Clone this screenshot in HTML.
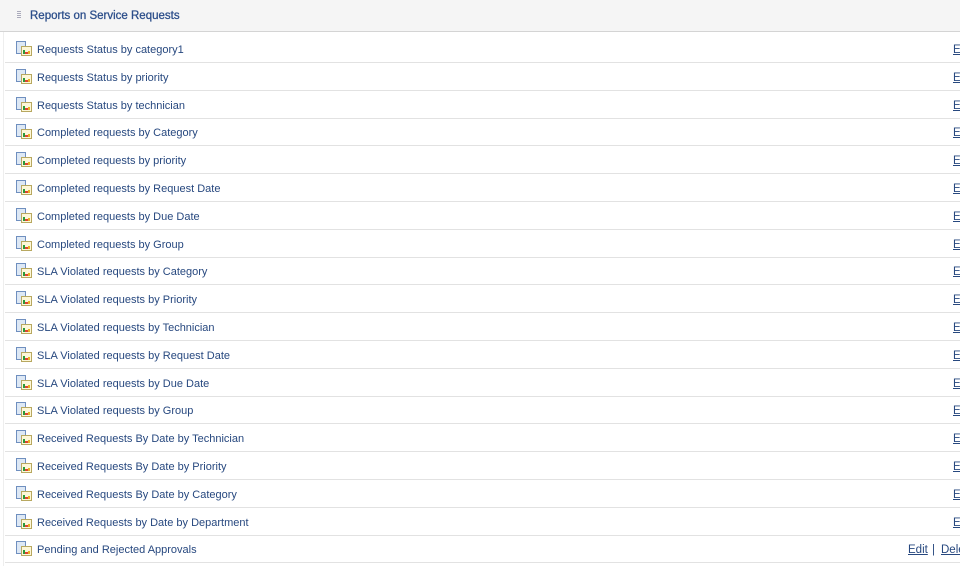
<!DOCTYPE html>
<html><head><style>
body{margin:0;width:960px;height:566px;overflow:hidden;background:#fff;font-family:"Liberation Sans",sans-serif;position:relative}
.hdr{position:absolute;left:0;top:0;width:960px;height:31px;background:#f5f5f5;border-bottom:1px solid #d4d4d4}
.hdr span{position:absolute;left:30px;top:10px;font-size:11.5px;color:#2d4f8b;-webkit-text-stroke:0.3px #2d4f8b}
.grip{position:absolute;left:17px;top:11px;width:4px;height:8px;background:repeating-linear-gradient(#aab 0 1px,transparent 1px 2px)}
.vl{position:absolute;left:3px;top:32px;width:1px;height:534px;background:#eee}
.row{position:absolute;left:5px;width:955px;height:27px;border-bottom:1px solid #e2e2e2}
.t{position:absolute;left:32px;top:9px;font-size:11px;color:#27487f;white-space:nowrap}
.e{position:absolute;left:948px;top:9px;font-size:11.5px;color:#27487f;text-decoration:underline}
.ic{position:absolute;left:11px;top:6px;width:16px;height:16px}
</style></head><body>
<div class="hdr"><div class="grip"></div><span>Reports on Service Requests</span></div>
<div class="vl"></div>
<svg width="0" height="0" style="position:absolute"><defs><g id="i"><rect x="0.5" y="0.5" width="9" height="12" fill="#dde8f5" stroke="#6f8fbf"/><rect x="5.5" y="5.5" width="10" height="9" fill="#fdf7d8" stroke="#b8a860"/><rect x="7" y="9" width="2" height="4" fill="#2a9a3a"/><rect x="9" y="11" width="3" height="2" fill="#d43"/><rect x="12" y="10" width="2" height="3" fill="#e8b020"/></g></defs></svg>
<div class="row" style="top:35px"><svg class="ic" viewBox="0 0 16 16"><use href="#i"/></svg><span class="t">Requests Status by category1</span><span class="e">Edit</span></div>
<div class="row" style="top:63px"><svg class="ic" viewBox="0 0 16 16"><use href="#i"/></svg><span class="t">Requests Status by priority</span><span class="e">Edit</span></div>
<div class="row" style="top:91px"><svg class="ic" viewBox="0 0 16 16"><use href="#i"/></svg><span class="t">Requests Status by technician</span><span class="e">Edit</span></div>
<div class="row" style="top:118px"><svg class="ic" viewBox="0 0 16 16"><use href="#i"/></svg><span class="t">Completed requests by Category</span><span class="e">Edit</span></div>
<div class="row" style="top:146px"><svg class="ic" viewBox="0 0 16 16"><use href="#i"/></svg><span class="t">Completed requests by priority</span><span class="e">Edit</span></div>
<div class="row" style="top:174px"><svg class="ic" viewBox="0 0 16 16"><use href="#i"/></svg><span class="t">Completed requests by Request Date</span><span class="e">Edit</span></div>
<div class="row" style="top:202px"><svg class="ic" viewBox="0 0 16 16"><use href="#i"/></svg><span class="t">Completed requests by Due Date</span><span class="e">Edit</span></div>
<div class="row" style="top:230px"><svg class="ic" viewBox="0 0 16 16"><use href="#i"/></svg><span class="t">Completed requests by Group</span><span class="e">Edit</span></div>
<div class="row" style="top:257px"><svg class="ic" viewBox="0 0 16 16"><use href="#i"/></svg><span class="t">SLA Violated requests by Category</span><span class="e">Edit</span></div>
<div class="row" style="top:285px"><svg class="ic" viewBox="0 0 16 16"><use href="#i"/></svg><span class="t">SLA Violated requests by Priority</span><span class="e">Edit</span></div>
<div class="row" style="top:313px"><svg class="ic" viewBox="0 0 16 16"><use href="#i"/></svg><span class="t">SLA Violated requests by Technician</span><span class="e">Edit</span></div>
<div class="row" style="top:341px"><svg class="ic" viewBox="0 0 16 16"><use href="#i"/></svg><span class="t">SLA Violated requests by Request Date</span><span class="e">Edit</span></div>
<div class="row" style="top:369px"><svg class="ic" viewBox="0 0 16 16"><use href="#i"/></svg><span class="t">SLA Violated requests by Due Date</span><span class="e">Edit</span></div>
<div class="row" style="top:396px"><svg class="ic" viewBox="0 0 16 16"><use href="#i"/></svg><span class="t">SLA Violated requests by Group</span><span class="e">Edit</span></div>
<div class="row" style="top:424px"><svg class="ic" viewBox="0 0 16 16"><use href="#i"/></svg><span class="t">Received Requests By Date by Technician</span><span class="e">Edit</span></div>
<div class="row" style="top:452px"><svg class="ic" viewBox="0 0 16 16"><use href="#i"/></svg><span class="t">Received Requests By Date by Priority</span><span class="e">Edit</span></div>
<div class="row" style="top:480px"><svg class="ic" viewBox="0 0 16 16"><use href="#i"/></svg><span class="t">Received Requests By Date by Category</span><span class="e">Edit</span></div>
<div class="row" style="top:508px"><svg class="ic" viewBox="0 0 16 16"><use href="#i"/></svg><span class="t">Received Requests by Date by Department</span><span class="e">Edit</span></div>
<div class="row" style="top:535px"><svg class="ic" viewBox="0 0 16 16"><use href="#i"/></svg><span class="t">Pending and Rejected Approvals</span><span class="e" style="left:903px">Edit</span><span class="e" style="left:927px;text-decoration:none">|</span><span class="e" style="left:936px">Delete</span></div>
</body></html>
